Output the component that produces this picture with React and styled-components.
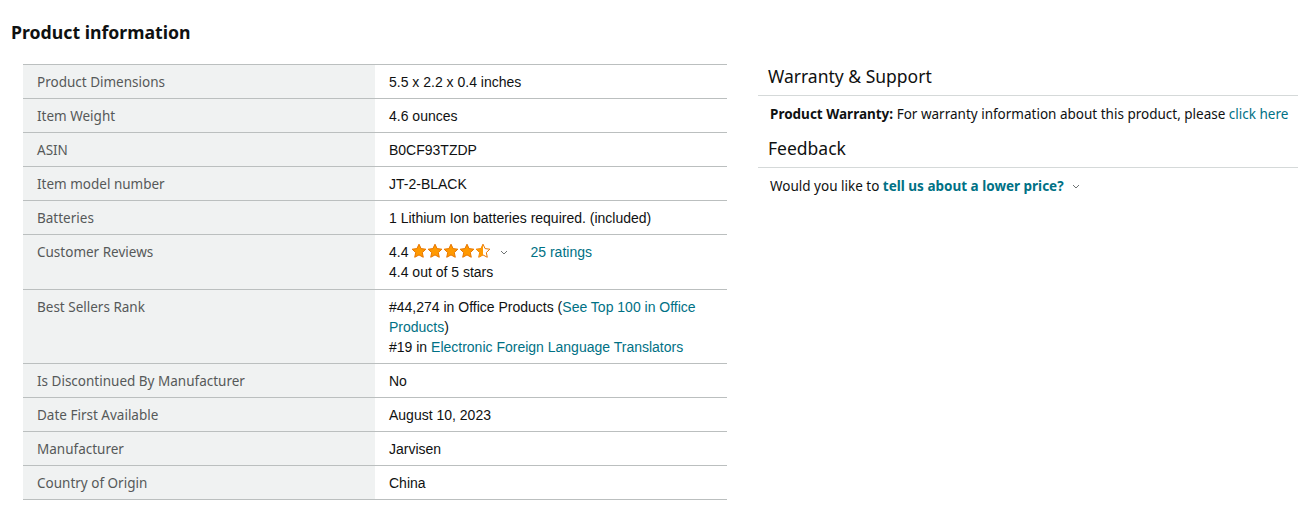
import React from 'react';
import styled, { createGlobalStyle } from 'styled-components';

const GlobalStyle = createGlobalStyle`
  body {
    margin: 0;
    background: #fff;
    color: #0f1111;
    font-family: "Noto Sans", Arial, sans-serif;
  }
`;

const Page = styled.div`
  display: flex;
  align-items: flex-start;
  padding: 20px 0 0 11px;
`;

const LeftCol = styled.div`
  width: 716px;
`;

const Title = styled.h2`
  margin: 0 0 20px;
  font-size: 17.7px;
  font-weight: 700;
  line-height: 24px;
`;

const Table = styled.table`
  margin-left: 12px;
  width: 704px;
  border-collapse: collapse;
  border-bottom: 1px solid #bbbfbf;
`;

const Row = styled.tr`
  border-top: 1px solid #bbbfbf;
`;

const Label = styled.th`
  width: 324px;
  background: #f0f2f2;
  color: #565959;
  font-family: "Noto Sans", sans-serif;
  font-weight: 400;
  font-size: 13.5px;
  text-align: left;
  vertical-align: top;
  line-height: 20px;
  padding: 7px 14px 6px;
`;

const Value = styled.td`
  font-family: "Liberation Sans", Arial, sans-serif;
  font-size: 14px;
  color: #0f1111;
  line-height: 20px;
  vertical-align: top;
  padding: 7px 14px ${p => (p.$tall ? 7 : 6)}px;
`;

const Link = styled.a`
  color: #007185;
  text-decoration: none;
  font-weight: ${p => (p.$bold ? 700 : 400)};
`;

const Stars = styled.span`
  display: inline-flex;
  vertical-align: -2px;
  margin-left: 3px;
`;

const Chevron = styled.svg`
  margin: 0 ${p => p.$after || 0}px 0 ${p => p.$before || 8}px;
  vertical-align: 2px;
`;

const RightCol = styled.div`
  flex: 1;
  margin-left: 31px;
  padding-top: 44px;
`;

const SectionHead = styled.h3`
  margin: 0;
  padding: 0 0 7px 10px;
  font-size: 17.5px;
  font-weight: 400;
  line-height: 24px;
  border-bottom: 1px solid #d5d9d9;
`;

const SectionBody = styled.p`
  margin: 0;
  padding: 8px 0 12px 12px;
  font-size: 13.5px;
  line-height: 20px;
  color: #0f1111;
  & b { font-weight: 700; }
`;

const starPath = 'M12 1.8l3.1 6.6 7.2.9-5.3 5 1.4 7.1L12 17.9l-6.4 3.5L7 14.3l-5.3-5 7.2-.9z';

const Star = ({ fill }) => (
  <svg width="16" height="16" viewBox="0 0 24 24">
    <defs>
      <clipPath id="half">
        <rect x="0" y="0" width="12" height="24" />
      </clipPath>
    </defs>
    <path
      d={starPath}
      fill={fill === 1 ? '#ff9900' : 'none'}
      stroke="#e77600"
      strokeWidth="1.5"
      strokeLinejoin="round"
    />
    {fill === 0.5 && <path d={starPath} fill="#ff9900" clipPath="url(#half)" />}
  </svg>
);

const Down = ({ before, after }) => (
  <Chevron $before={before} $after={after} width="8" height="5" viewBox="0 0 8 5">
    <path d="M1 1l3 3 3-3" fill="none" stroke="#6f7373" strokeWidth="1" />
  </Chevron>
);

const rows = [
  ['Product Dimensions', '5.5 x 2.2 x 0.4 inches'],
  ['Item Weight', '4.6 ounces'],
  ['ASIN', 'B0CF93TZDP'],
  ['Item model number', 'JT-2-BLACK'],
  ['Batteries', '1 Lithium Ion batteries required. (included)'],
  [
    'Customer Reviews',
    <>
      4.4
      <Stars>
        {[1, 1, 1, 1, 0.5].map((f, i) => (
          <Star key={i} fill={f} />
        ))}
      </Stars>
      <Down before={9} after={22} />
      <Link href="#">25 ratings</Link>
      <br />
      4.4 out of 5 stars
    </>,
    true,
  ],
  [
    'Best Sellers Rank',
    <>
      #44,274 in Office Products (<Link href="#">See Top 100 in Office Products</Link>)
      <br />
      #19 in <Link href="#">Electronic Foreign Language Translators</Link>
    </>,
  ],
  ['Is Discontinued By Manufacturer', 'No'],
  ['Date First Available', 'August 10, 2023'],
  ['Manufacturer', 'Jarvisen'],
  ['Country of Origin', 'China'],
];

export default function App() {
  return (
    <>
      <GlobalStyle />
      <Page>
        <LeftCol>
          <Title>Product information</Title>
          <Table>
            <tbody>
              {rows.map(([label, value, tall]) => (
                <Row key={label}>
                  <Label>{label}</Label>
                  <Value $tall={tall}>{value}</Value>
                </Row>
              ))}
            </tbody>
          </Table>
        </LeftCol>
        <RightCol>
          <SectionHead>Warranty &amp; Support</SectionHead>
          <SectionBody>
            <b>Product Warranty:</b> For warranty information about this product, please{' '}
            <Link href="#">click here</Link>
          </SectionBody>
          <SectionHead>Feedback</SectionHead>
          <SectionBody>
            Would you like to <Link href="#" $bold>tell us about a lower price?</Link>
            <Down before={8} />
          </SectionBody>
        </RightCol>
      </Page>
    </>
  );
}
